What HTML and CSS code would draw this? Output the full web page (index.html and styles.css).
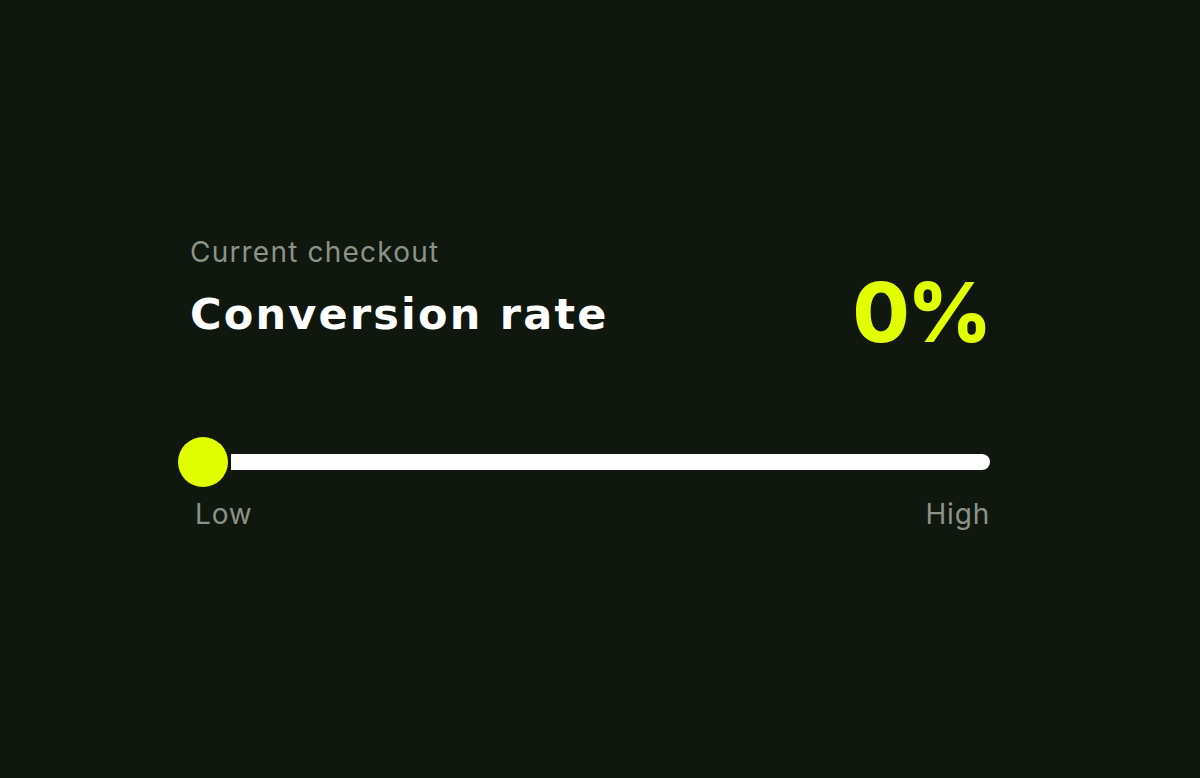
FILE: index.html
```html
<!DOCTYPE html>
<html lang="en">
<head>
	<meta charset="UTF-8"/>
	<meta name="viewport" content="width=device-width,initial-scale=1.0"/>
	<title>Conversion rate</title>
	<link rel="stylesheet" href="styles.css">
</head>
<body>

<main class="meter">
	<div class="meter-head">
		<div>
			<p class="meter-label">Current checkout</p>
			<h1 class="meter-title">Conversion rate</h1>
		</div>
		<div class="meter-value">0%</div>
	</div>

	<div class="slider">
		<span class="slider-knob"></span>
		<span class="slider-track"></span>
	</div>

	<div class="slider-scale">
		<span>Low</span>
		<span>High</span>
	</div>
</main>

</body>
</html>
```

FILE: styles.css
```css
* {box-sizing: border-box;}
html, body {
	margin: 0;
	height: 100%;
}
body {
	background: #10170e;
	font-family: Inter, "Noto Sans", sans-serif;
	color: #ffffff;
}
.meter {
	width: 800px;
	margin-left: 190px;
	padding-top: 235px;
}
.meter-head {
	display: flex;
	justify-content: space-between;
	align-items: flex-end;
}
.meter-label {
	margin: 0;
	font-size: 28px;
	line-height: 34px;
	color: #8b9288;
	letter-spacing: 1.2px;
}
/* wide display face for the heading */
.meter-title {
	margin: 20px 0 0;
	font-family: "DejaVu Sans", sans-serif;
	font-size: 43px;
	font-weight: 700;
	line-height: 50px;
	letter-spacing: 2.2px;
}
.meter-value {
	font-size: 82px;
	font-weight: 800;
	line-height: 90px;
	color: #e1ff00;
	letter-spacing: -2px;
	margin-bottom: -19px;
}
.slider {
	display: flex;
	align-items: center;
	gap: 3px;
	margin: 98px 0 0 -12px;
	height: 50px;
}
.slider-knob {
	width: 50px;
	height: 50px;
	border-radius: 50%;
	background: #e1ff00;
	flex: none;
}
.slider-track {
	flex: 1;
	height: 16px;
	background: #ffffff;
	border-radius: 0 8px 8px 0;
}
.slider-scale {
	display: flex;
	justify-content: space-between;
	margin-top: 10px;
	padding-left: 5px;
	font-size: 28px;
	line-height: 34px;
	color: #8b9288;
	letter-spacing: 0.8px;
}
```
